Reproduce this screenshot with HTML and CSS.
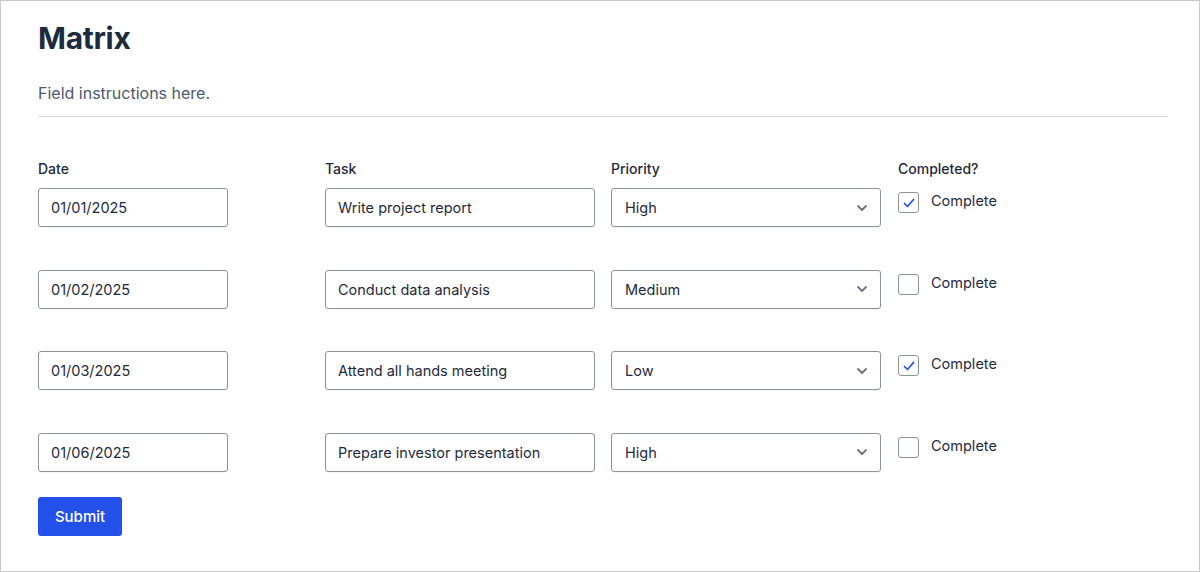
FILE: index.html
```html
<!DOCTYPE html>
<html lang="en">
<head>
<meta charset="utf-8">
<title>Matrix</title>
<link rel="stylesheet" href="styles.css">
</head>
<body>
<div class="frame">
  <h1 class="title">Matrix</h1>
  <p class="instructions">Field instructions here.</p>
  <hr class="rule">
  <div class="matrix">
    <div class="head">Date</div>
    <div class="head">Task</div>
    <div class="head">Priority</div>
    <div class="head">Completed?</div>

    <div class="cell"><div class="field date">01/01/2025</div></div>
    <div class="cell"><div class="field task">Write project report</div></div>
    <div class="cell"><div class="field select">High<svg class="chev" viewBox="0 0 12 8" width="12" height="8"><path d="M2 2l4 4 4-4" fill="none" stroke="#6b7280" stroke-width="1.8" stroke-linecap="round" stroke-linejoin="round"/></svg></div></div>
    <div class="cell check"><span class="box on"><svg viewBox="0 0 16 16" width="16" height="16"><path d="M3.5 8.5l3 3 6-7" fill="none" stroke="#2250e9" stroke-width="1.7" stroke-linecap="round" stroke-linejoin="round"/></svg></span><span class="clabel">Complete</span></div>

    <div class="cell"><div class="field date">01/02/2025</div></div>
    <div class="cell"><div class="field task">Conduct data analysis</div></div>
    <div class="cell"><div class="field select">Medium<svg class="chev" viewBox="0 0 12 8" width="12" height="8"><path d="M2 2l4 4 4-4" fill="none" stroke="#6b7280" stroke-width="1.8" stroke-linecap="round" stroke-linejoin="round"/></svg></div></div>
    <div class="cell check"><span class="box"></span><span class="clabel">Complete</span></div>

    <div class="cell"><div class="field date">01/03/2025</div></div>
    <div class="cell"><div class="field task">Attend all hands meeting</div></div>
    <div class="cell"><div class="field select">Low<svg class="chev" viewBox="0 0 12 8" width="12" height="8"><path d="M2 2l4 4 4-4" fill="none" stroke="#6b7280" stroke-width="1.8" stroke-linecap="round" stroke-linejoin="round"/></svg></div></div>
    <div class="cell check"><span class="box on"><svg viewBox="0 0 16 16" width="16" height="16"><path d="M3.5 8.5l3 3 6-7" fill="none" stroke="#2250e9" stroke-width="1.7" stroke-linecap="round" stroke-linejoin="round"/></svg></span><span class="clabel">Complete</span></div>

    <div class="cell"><div class="field date">01/06/2025</div></div>
    <div class="cell"><div class="field task">Prepare investor presentation</div></div>
    <div class="cell"><div class="field select">High<svg class="chev" viewBox="0 0 12 8" width="12" height="8"><path d="M2 2l4 4 4-4" fill="none" stroke="#6b7280" stroke-width="1.8" stroke-linecap="round" stroke-linejoin="round"/></svg></div></div>
    <div class="cell check"><span class="box"></span><span class="clabel">Complete</span></div>
  </div>
  <button class="submit">Submit</button>
</div>
</body>
</html>
```

FILE: styles.css
```css
html, body {
  margin: 0;
  padding: 0;
  background: #ffffff;
}
body {
  font-family: Inter, "Noto Sans", "Liberation Sans", sans-serif;
  color: #1f2a3c;
}
.frame {
  box-sizing: border-box;
  width: 1200px;
  height: 572px;
  border: 1px solid #c9c9c9;
  padding: 17px 31px 0 37px;
}
.title {
  margin: 0;
  font-size: 30px;
  line-height: 40px;
  font-weight: 700;
  color: #1c2b3e;
  letter-spacing: -0.3px;
}
.instructions {
  margin: 23px 0 0;
  font-size: 16px;
  line-height: 24px;
  color: #4a5a70;
}
.rule {
  margin: 11px 0 0;
  border: 0;
  height: 1px;
  background: #dcdcdc;
}
.matrix {
  display: grid;
  grid-template-columns: 287px 286px 287px 1fr;
  row-gap: 0;
  margin-top: 42px;
}
.head {
  font-size: 14px;
  line-height: 20px;
  font-weight: 500;
  color: #1f2a3c;
  margin-bottom: 9px;
}
.cell {
  height: 39px;
  margin-bottom: 42.5px;
}
.matrix .cell:nth-last-child(-n+4) {
  margin-bottom: 25px;
}
.field {
  box-sizing: border-box;
  height: 39px;
  border: 1px solid #8e939b;
  border-radius: 3px;
  padding: 0 12px;
  display: flex;
  align-items: center;
  font-size: 14.5px;
  color: #1f2a3c;
  box-shadow: 0 1px 1px rgba(0,0,0,0.04);
}
.date { width: 190px; }
.task { width: 270px; }
.select {
  width: 270px;
  justify-content: space-between;
  padding-left: 13px;
  padding-right: 12px;
}
.chev { display: block; }
.check {
  display: flex;
  align-items: flex-start;
  gap: 12px;
  padding-top: 4px;
  box-sizing: border-box;
}
.box {
  box-sizing: border-box;
  width: 21px;
  height: 21px;
  border: 1px solid #8e939b;
  border-radius: 3px;
  display: flex;
  align-items: center;
  justify-content: center;
  background: #fff;
}
.clabel {
  font-size: 14.5px;
  line-height: 20px;
  color: #1f2a3c;
  margin-top: -1px;
}
.submit {
  display: block;
  margin: 0;
  width: 84px;
  height: 39px;
  border: 0;
  border-radius: 3px;
  background: #2250e9;
  color: #ffffff;
  font-family: Inter, "Noto Sans", "Liberation Sans", sans-serif;
  font-size: 15px;
  font-weight: 500;
  padding: 0;
}
```
